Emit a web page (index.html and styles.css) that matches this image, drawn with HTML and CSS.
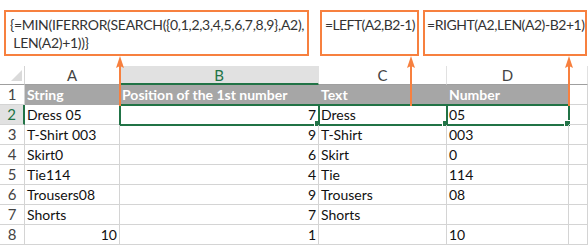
FILE: index.html
```html
<!DOCTYPE html>
<html lang="en">
<head>
    <meta charset="UTF-8">
    <title>Extract number from string</title>
    <link rel="stylesheet" href="styles.css">
</head>
<body>
    <div class="page">
        <div class="formulas">
            <div class="formula formula-min">{=MIN(IFERROR(SEARCH({0,1,2,3,4,5,6,7,8,9},A2),<br>&nbsp;LEN(A2)+1))}</div>
            <div class="formula formula-left">=LEFT(A2,B2-1)</div>
            <div class="formula formula-right">=RIGHT(A2,LEN(A2)-B2+1)</div>
        </div>

        <div class="sheet">
            <div class="col-head corner"><span class="corner-mark"></span></div>
            <div class="col-head">A</div>
            <div class="col-head active">B</div>
            <div class="col-head">C</div>
            <div class="col-head">D</div>
            <div class="col-head"></div>

            <div class="row-head">1</div>
            <div class="cell title">String</div>
            <div class="cell title">Position of the 1st number</div>
            <div class="cell title">Text</div>
            <div class="cell title">Number</div>
            <div class="cell"></div>

            <div class="row-head active">2</div>
            <div class="cell">Dress 05</div>
            <div class="cell num sel">7</div>
            <div class="cell sel">Dress</div>
            <div class="cell sel">05</div>
            <div class="cell"></div>

            <div class="row-head">3</div>
            <div class="cell">T-Shirt 003</div>
            <div class="cell num">9</div>
            <div class="cell">T-Shirt</div>
            <div class="cell">003</div>
            <div class="cell"></div>

            <div class="row-head">4</div>
            <div class="cell">Skirt0</div>
            <div class="cell num">6</div>
            <div class="cell">Skirt</div>
            <div class="cell">0</div>
            <div class="cell"></div>

            <div class="row-head">5</div>
            <div class="cell">Tie114</div>
            <div class="cell num">4</div>
            <div class="cell">Tie</div>
            <div class="cell">114</div>
            <div class="cell"></div>

            <div class="row-head">6</div>
            <div class="cell">Trousers08</div>
            <div class="cell num">9</div>
            <div class="cell">Trousers</div>
            <div class="cell">08</div>
            <div class="cell"></div>

            <div class="row-head">7</div>
            <div class="cell">Shorts</div>
            <div class="cell num">7</div>
            <div class="cell">Shorts</div>
            <div class="cell"></div>
            <div class="cell"></div>

            <div class="row-head">8</div>
            <div class="cell num">10</div>
            <div class="cell num">1</div>
            <div class="cell"></div>
            <div class="cell">10</div>
            <div class="cell"></div>
        </div>

        <!-- arrows from the formulas down to the column titles -->
        <svg class="arrow arrow-b" width="10" height="50" viewBox="0 0 10 50">
            <polygon points="5,0 9,12 5,10 1,12" />
            <rect x="4" y="8" width="2" height="42" />
        </svg>
        <svg class="arrow arrow-c" width="10" height="50" viewBox="0 0 10 50">
            <polygon points="5,0 9,12 5,10 1,12" />
            <rect x="4" y="8" width="2" height="42" />
        </svg>
        <svg class="arrow arrow-d" width="10" height="50" viewBox="0 0 10 50">
            <polygon points="5,0 9,12 5,10 1,12" />
            <rect x="4" y="8" width="2" height="42" />
        </svg>
    </div>
</body>
</html>
```

FILE: styles.css
```css
:root {
    --orange: #f7803f;
    --green: #217346;
    --grid: #d4d4d4;
    --title-bg: #a6a6a6;
    --head-text: #444444;
}

* {
    margin: 0;
    padding: 0;
    box-sizing: border-box;
}

body {
    font-family: Lato, 'Open Sans', sans-serif;
    font-size: 14px;
    color: #111111;
    background-color: #ffffff;
}

.page {
    position: relative;
    width: 588px;
    height: 246px;
    overflow: hidden;
}

/* formula boxes */
.formulas {
    display: flex;
    align-items: flex-start;
    height: 66px;
    padding-top: 10px;
    padding-left: 4px;
}

.formula {
    height: 46px;
    border: 2px solid var(--orange);
    color: #333333;
    line-height: 18px;
    letter-spacing: -0.3px;
    padding-top: 4px;
    white-space: nowrap;
}

.formula-min {
    width: 305px;
    padding-left: 4px;
}

.formula-left {
    width: 99px;
    margin-left: 11px;
    padding-left: 3px;
    letter-spacing: -0.6px;
}

.formula-right {
    width: 164px;
    margin-left: 4px;
    padding-left: 2px;
    letter-spacing: -0.45px;
}

/* worksheet */
.sheet {
    display: grid;
    grid-template-columns: 25px 95px 199px 128px 122px 1fr;
    grid-template-rows: 19px repeat(8, 20px);
}

.col-head {
    text-align: center;
    color: var(--head-text);
    font-size: 15px;
    line-height: 18px;
    border-right: 1px solid #e1e1e1;
    border-bottom: 1px solid #9f9f9f;
}

.col-head.active {
    background-color: #e1e1e1;
    color: var(--green);
    border-bottom: 2px solid var(--green);
}

.corner {
    position: relative;
    border-right-color: var(--grid);
}

.corner-mark {
    position: absolute;
    right: 2px;
    bottom: 3px;
    width: 0;
    height: 0;
    border-left: 11px solid transparent;
    border-bottom: 11px solid #dadada;
}

.row-head {
    text-align: center;
    color: var(--head-text);
    font-size: 15px;
    line-height: 19px;
    border-right: 1px solid var(--grid);
    border-bottom: 1px solid var(--grid);
}

.row-head.active {
    background-color: #e1e1e1;
    color: var(--green);
    border-right: 2px solid var(--green);
}

.cell {
    position: relative;
    padding: 0 2px;
    line-height: 19px;
    white-space: nowrap;
    border-right: 1px solid var(--grid);
    border-bottom: 1px solid var(--grid);
}

.cell.num {
    text-align: right;
}

.cell.title {
    background-color: var(--title-bg);
    color: #ffffff;
    font-weight: bold;
    border-color: var(--title-bg);
}

.cell.sel {
    outline: 2px solid var(--green);
    outline-offset: -1px;
}

.cell.sel::after {
    content: '';
    position: absolute;
    right: -3px;
    bottom: -3px;
    width: 5px;
    height: 5px;
    background-color: var(--green);
    border: 1px solid #ffffff;
}

/* arrows */
.arrow {
    position: absolute;
    top: 56px;
    fill: var(--orange);
}

.arrow-b {
    left: 115px;
}

.arrow-c {
    left: 406px;
}

.arrow-d {
    left: 564px;
}
```
